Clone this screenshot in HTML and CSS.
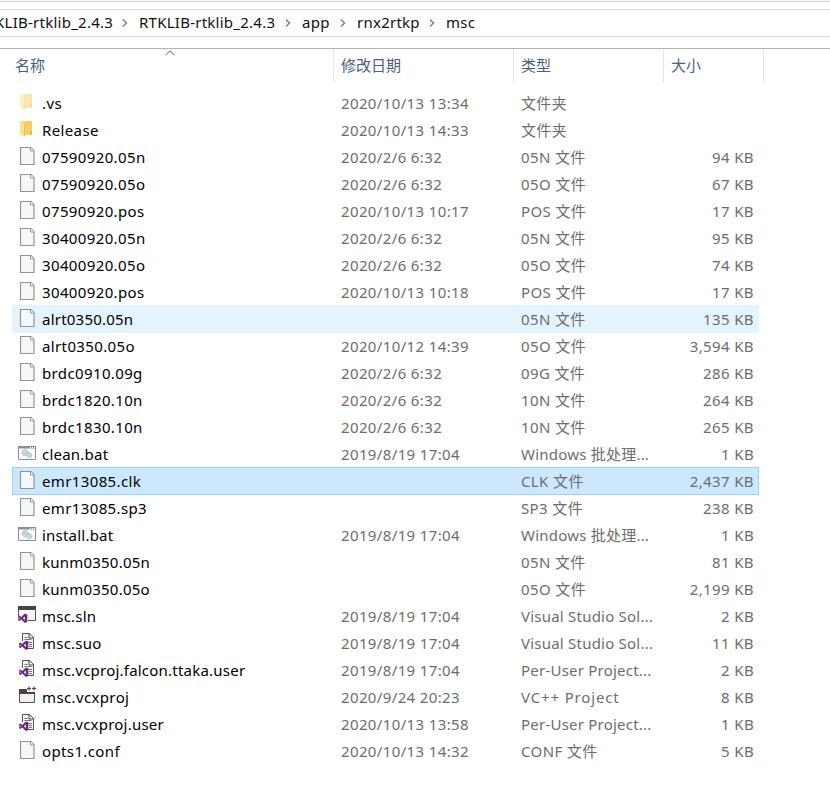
FILE: index.html
```
<!DOCTYPE html>
<html lang="zh">
<head>
    <meta charset="utf-8">
    <title>msc</title>
    <link rel="stylesheet" href="styles.css">
</head>
<body>
    <svg class="defs">
        <symbol id="folder" viewBox="0 0 20 24">
            <path d="M7 3h8v14H7z" fill="#f3cf68"/>
            <path d="M13 13h2v4h-2z" fill="#e9bb45"/>
            <path d="M3 3h4.500l1 2v13l-1.500 1-4-3z" fill="#ffe08a"/>
            <path d="M7.500 5v13" stroke="#e8bd4e"/>
        </symbol>
        <symbol id="file" viewBox="0 0 20 24">
            <path d="M3.500 2.500h10.500l3 3v14H3.500z" fill="#f6f7f8" stroke="#949494" stroke-width="1.200"/>
            <path d="M13.500 2.500V6H17" fill="#fff" stroke="#949494"/>
        </symbol>
        <symbol id="bat" viewBox="0 0 20 24">
            <path d="M1.500 4.500h17v13h-17z" fill="#fff" stroke="#8c8f92"/>
            <path d="M1 4h18v2.500H1z" fill="#8c8f92"/>
            <path d="M13 5.500h5" stroke="#fff" stroke-dasharray="1 1"/>
            <circle cx="8" cy="10.500" r="2.800" fill="#e5e8ea" stroke="#888e92" stroke-dasharray="1.300 .5"/>
            <circle cx="8" cy="10.500" r="1" fill="#fff" stroke="#999" stroke-width=".6"/>
            <circle cx="12.300" cy="13.300" r="2.500" fill="#d9edf7" stroke="#7da9c2" stroke-dasharray="1.300 .5"/>
            <circle cx="12.300" cy="13.300" r=".8" fill="#fff" stroke="#7da9c2" stroke-width=".6"/>
        </symbol>
        <symbol id="vs" viewBox="0 0 10 10">
            <path d="M7 0l2.500 1v8L7 10 3.200 6.300 1.200 8 0 7.300V2.700L1.200 2l2 1.700zM7 3.200L4.800 5 7 6.800zM1.300 3.900v2.200l1-1.100z" fill="#6b2a80" fill-rule="evenodd"/>
        </symbol>
        <symbol id="sln" viewBox="0 0 20 24">
            <path d="M1.500 3v9M18.500 3v13.500H11" fill="none" stroke="#555"/>
            <path d="M2 6h16v10H2z" fill="#f5f5f5"/>
            <path d="M1 2h18v4H1z" fill="#454545"/>
            <use href="#vs" x="1" y="9.500" width="10" height="9.500"/>
        </symbol>
        <symbol id="suo" viewBox="0 0 20 24">
            <path d="M5.500 10V2.500h7l4 4v11H11" fill="#f5f5f5" stroke="#555"/>
            <path d="M12 2v5h5" fill="none" stroke="#454545"/>
            <path d="M7.500 6.500h3M7.500 8.500h7M11 11.500h4M12 13.500h3M12 15.500h3" stroke="#777"/>
            <use href="#vs" x="2" y="9.500" width="10" height="9.500"/>
        </symbol>
        <symbol id="vcx" viewBox="0 0 20 24">
            <path d="M2.500 5v12.500h15V9" fill="#f0f0f0" stroke="#555"/>
            <path d="M2 4h8v3h8v2H2z" fill="#454545"/>
            <path d="M10 3.500h4M12 1.500v4M15 3.500h4M17 1.500v4" stroke="#6b2a80" stroke-width="1.200"/>
        </symbol>
        <symbol id="sep" viewBox="0 0 8 10">
            <path d="M2 1.500L5.500 5 2 8.500" fill="none" stroke="#808080" stroke-width="1.500"/>
        </symbol>
    </svg>

    <div class="strip"></div>
    <div class="address">
        <span class="crumb c1">KLIB-rtklib_2.4.3</span><svg class="sep"><use href="#sep"/></svg>
        <span class="crumb c2">RTKLIB-rtklib_2.4.3</span><svg class="sep"><use href="#sep"/></svg>
        <span class="crumb c3">app</span><svg class="sep"><use href="#sep"/></svg>
        <span class="crumb c4">rnx2rtkp</span><svg class="sep"><use href="#sep"/></svg>
        <span class="crumb">msc</span>
    </div>

    <div class="header">
        <div class="col-name">名称<svg class="sort" viewBox="0 0 10 6"><path d="M.5 5.200L5 .8l4.500 4.400" fill="none" stroke="#666"/></svg></div>
        <div>修改日期</div>
        <div>类型</div>
        <div>大小</div>
    </div>

    <div class="list">
        <div class="row hidden"><svg><use href="#folder"/></svg><span class="name">.vs</span><span class="date">2020/10/13 13:34</span><span class="type">文件夹</span><span class="size"></span></div>
        <div class="row"><svg><use href="#folder"/></svg><span class="name">Release</span><span class="date">2020/10/13 14:33</span><span class="type">文件夹</span><span class="size"></span></div>
        <div class="row"><svg><use href="#file"/></svg><span class="name">07590920.05n</span><span class="date">2020/2/6 6:32</span><span class="type">05N 文件</span><span class="size">94 KB</span></div>
        <div class="row"><svg><use href="#file"/></svg><span class="name">07590920.05o</span><span class="date">2020/2/6 6:32</span><span class="type">05O 文件</span><span class="size">67 KB</span></div>
        <div class="row"><svg><use href="#file"/></svg><span class="name">07590920.pos</span><span class="date">2020/10/13 10:17</span><span class="type">POS 文件</span><span class="size">17 KB</span></div>
        <div class="row"><svg><use href="#file"/></svg><span class="name">30400920.05n</span><span class="date">2020/2/6 6:32</span><span class="type">05N 文件</span><span class="size">95 KB</span></div>
        <div class="row"><svg><use href="#file"/></svg><span class="name">30400920.05o</span><span class="date">2020/2/6 6:32</span><span class="type">05O 文件</span><span class="size">74 KB</span></div>
        <div class="row"><svg><use href="#file"/></svg><span class="name">30400920.pos</span><span class="date">2020/10/13 10:18</span><span class="type">POS 文件</span><span class="size">17 KB</span></div>
        <div class="row hover"><svg><use href="#file"/></svg><span class="name tight">alrt0350.05n</span><span class="date"></span><span class="type">05N 文件</span><span class="size">135 KB</span></div>
        <div class="row"><svg><use href="#file"/></svg><span class="name">alrt0350.05o</span><span class="date">2020/10/12 14:39</span><span class="type">05O 文件</span><span class="size">3,594 KB</span></div>
        <div class="row"><svg><use href="#file"/></svg><span class="name">brdc0910.09g</span><span class="date">2020/2/6 6:32</span><span class="type">09G 文件</span><span class="size">286 KB</span></div>
        <div class="row"><svg><use href="#file"/></svg><span class="name">brdc1820.10n</span><span class="date">2020/2/6 6:32</span><span class="type">10N 文件</span><span class="size">264 KB</span></div>
        <div class="row"><svg><use href="#file"/></svg><span class="name">brdc1830.10n</span><span class="date">2020/2/6 6:32</span><span class="type">10N 文件</span><span class="size">265 KB</span></div>
        <div class="row"><svg><use href="#bat"/></svg><span class="name tight">clean.bat</span><span class="date">2019/8/19 17:04</span><span class="type tight">Windows 批处理...</span><span class="size">1 KB</span></div>
        <div class="row selected"><svg><use href="#file"/></svg><span class="name">emr13085.clk</span><span class="date"></span><span class="type">CLK 文件</span><span class="size">2,437 KB</span></div>
        <div class="row"><svg><use href="#file"/></svg><span class="name">emr13085.sp3</span><span class="date"></span><span class="type">SP3 文件</span><span class="size">238 KB</span></div>
        <div class="row"><svg><use href="#bat"/></svg><span class="name tight">install.bat</span><span class="date">2019/8/19 17:04</span><span class="type tight">Windows 批处理...</span><span class="size">1 KB</span></div>
        <div class="row"><svg><use href="#file"/></svg><span class="name tight">kunm0350.05n</span><span class="date"></span><span class="type">05N 文件</span><span class="size">81 KB</span></div>
        <div class="row"><svg><use href="#file"/></svg><span class="name tight">kunm0350.05o</span><span class="date"></span><span class="type">05O 文件</span><span class="size">2,199 KB</span></div>
        <div class="row"><svg><use href="#sln"/></svg><span class="name tight">msc.sln</span><span class="date">2019/8/19 17:04</span><span class="type tight">Visual Studio Sol...</span><span class="size">2 KB</span></div>
        <div class="row"><svg><use href="#suo"/></svg><span class="name tight">msc.suo</span><span class="date">2019/8/19 17:04</span><span class="type tight">Visual Studio Sol...</span><span class="size">11 KB</span></div>
        <div class="row"><svg><use href="#suo"/></svg><span class="name tight">msc.vcproj.falcon.ttaka.user</span><span class="date">2019/8/19 17:04</span><span class="type tight">Per-User Project...</span><span class="size">2 KB</span></div>
        <div class="row"><svg><use href="#vcx"/></svg><span class="name">msc.vcxproj</span><span class="date">2020/9/24 20:23</span><span class="type wide">VC++ Project</span><span class="size">8 KB</span></div>
        <div class="row"><svg><use href="#suo"/></svg><span class="name tight">msc.vcxproj.user</span><span class="date">2020/10/13 13:58</span><span class="type tight">Per-User Project...</span><span class="size">1 KB</span></div>
        <div class="row"><svg><use href="#file"/></svg><span class="name">opts1.conf</span><span class="date">2020/10/13 14:32</span><span class="type">CONF 文件</span><span class="size">5 KB</span></div>
    </div>
</body>
</html>
```
FILE: styles.css
```
*
{
    box-sizing: border-box;
}

body
{
    margin: 0;
    height: 803px;
    overflow: hidden;
    background-color: white;
    font-family: "Noto Sans", "Noto Sans CJK SC", sans-serif;
    font-size: 15px;
    white-space: nowrap;
}

.defs
{
    display: none;
}

.strip
{
    height: 2px;
    background-color: #f5f5f5;
    border-bottom: 1px solid #dadada;
}

.address
{
    display: flex;
    align-items: center;
    height: 28px;
    margin-top: 7px;
    border-top: 1px solid #d9d9d9;
    border-bottom: 1px solid #d9d9d9;
    color: #111;
}

.crumb
{
    height: 26px;
    line-height: 24px;
    letter-spacing: 0.25px;
}

.c1
{
    width: 126px;
    margin-left: -5px;
}

.c2
{
    width: 145px;
}

.c3
{
    width: 37px;
}

.c4
{
    width: 71px;
}

.sep
{
    width: 8px;
    height: 10px;
    margin-right: 10px;
}

.header
{
    display: grid;
    grid-template-columns: 334px 180px 150px 100px;
    height: 33px;
    margin-top: 11px;
    border-top: 1px solid #b5b5b5;
    color: #4c607a;
    line-height: 33px;
}

.header div
{
    padding-left: 7px;
    border-right: 1px solid #e5e5e5;
}

.header .col-name
{
    position: relative;
    padding-left: 15px;
}

.sort
{
    position: absolute;
    left: 165px;
    top: 1px;
    width: 10px;
    height: 6px;
}

.list
{
    margin-top: 8px;
    padding-left: 12px;
}

.row
{
    display: grid;
    grid-template-columns: 25px 299px 180px 138px 95px;
    width: 747px;
    height: 28px;
    margin-bottom: -1px;
    padding-left: 5px;
    line-height: 28px;
    letter-spacing: 0.37px;
    color: #6d6d6d;
}

.row svg
{
    width: 20px;
    height: 24px;
    margin-top: 2px;
}

.row .name
{
    color: black;
}

.row .size
{
    text-align: right;
}

.row .tight
{
    letter-spacing: 0.22px;
}

.row .wide
{
    letter-spacing: 0.85px;
}

.hidden svg
{
    opacity: 0.5;
}

.hover
{
    background-color: #e5f3ff;
}

.selected
{
    background-color: #cce8ff;
    box-shadow: inset 0 0 0 1px #99d1ff;
}
```
